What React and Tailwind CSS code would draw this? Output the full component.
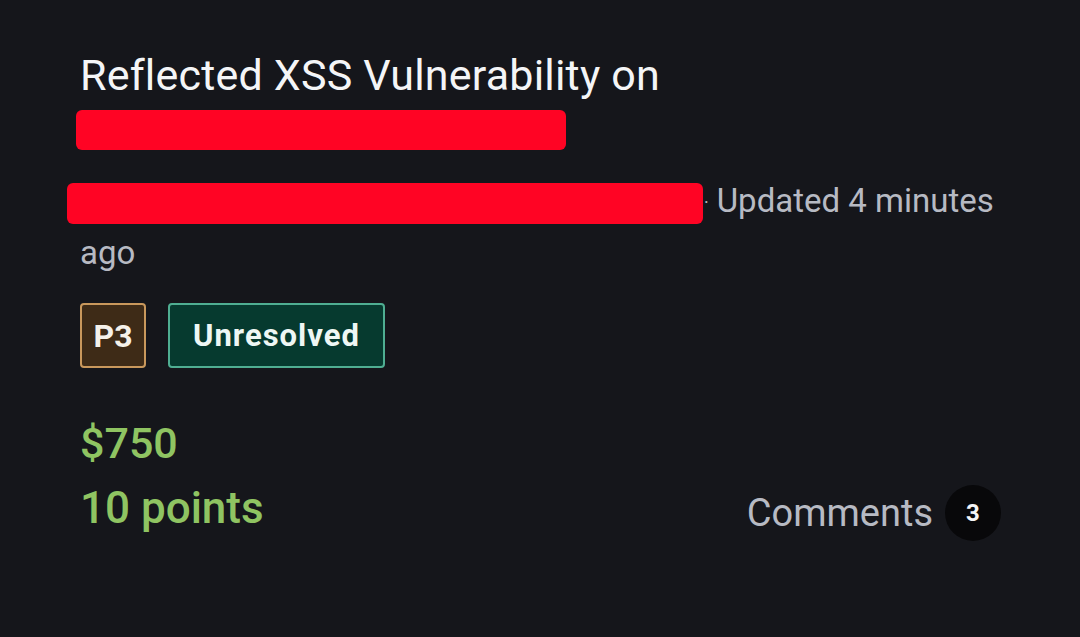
import React from 'react';

const App = () => {
  return (
    <div className="min-h-[637px] w-full bg-[#15161b] font-['Roboto',sans-serif]">
      <div className="pl-[80px] pr-[80px] pt-[50px]">
        <h2 className="text-[43px] leading-[51px] tracking-[0.2px] text-[#f4f5f7] font-normal">
          Reflected XSS Vulnerability on
          <br />
          <span className="-ml-[4px] inline-block h-[40px] w-[490px] rounded-[6px] bg-[#ff0424] align-middle" />
        </h2>
        <p className="mt-[24px] text-[33px] leading-[50px] text-[#b7bac3]">
          <span className="-ml-[13px] inline-block h-[41px] w-[636px] rounded-[6px] bg-[#ff0424] align-middle" />
          <span className="ml-[1px] mr-[8px] text-[18px] align-middle">·</span>
          Updated 4 minutes ago
        </p>
        <div className="mt-[25px] flex gap-[22px]">
          <span className="flex h-[65px] w-[66px] items-center justify-center rounded-[4px] border-2 border-[#c9985c] bg-[#3e2b17] text-[32px] font-bold text-[#f5f1ea]">
            P3
          </span>
          <span className="flex h-[65px] w-[217px] items-center justify-center rounded-[4px] border-2 border-[#4fae92] bg-[#063a2f] text-[31px] font-bold tracking-[1px] text-[#eef7f4]">
            Unresolved
          </span>
        </div>
        <div className="mt-[49px] text-[43px] font-medium leading-[52px] text-[#8fc462]">$750</div>
        <div className="mt-[6px] flex items-center justify-between">
          <span className="text-[44px] font-medium leading-[52px] text-[#8fc462]">10 points</span>
          <div className="mr-[-1px] mt-[10px] flex items-center gap-[12px]">
            <span className="text-[38px] leading-[52px] text-[#b7bac3]">Comments</span>
            <span className="flex h-[56px] w-[56px] items-center justify-center rounded-full bg-[#08080a] text-[24px] font-bold text-[#f4f5f7]">
              3
            </span>
          </div>
        </div>
      </div>
    </div>
  );
};

export default App;
